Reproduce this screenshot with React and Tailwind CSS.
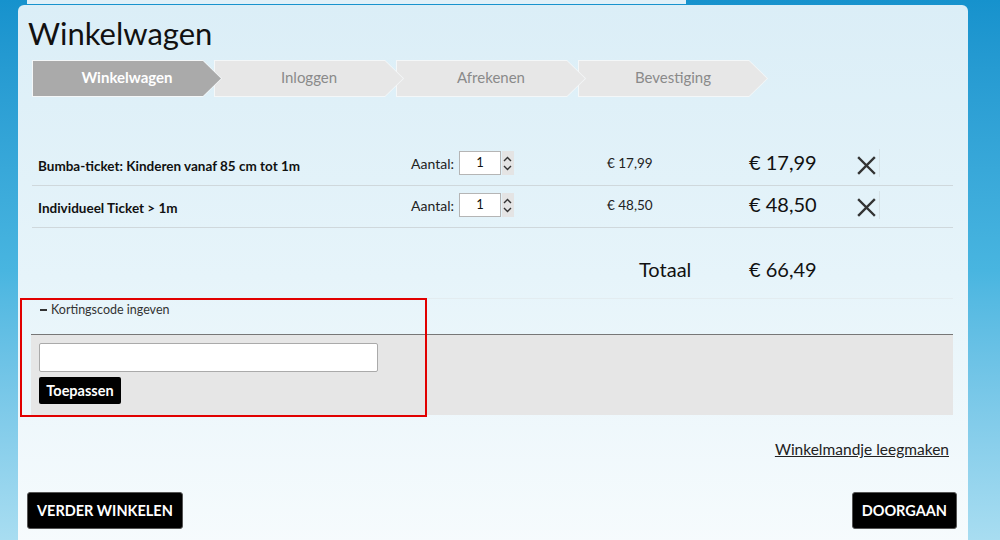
import React from 'react';

const steps = [
  { label: 'Winkelwagen', active: true },
  { label: 'Inloggen' },
  { label: 'Afrekenen' },
  { label: 'Bevestiging' },
];

const items = [
  { name: 'Bumba-ticket: Kinderen vanaf 85 cm tot 1m', qty: 1, price: '€ 17,99', total: '€ 17,99' },
  { name: 'Individueel Ticket > 1m', qty: 1, price: '€ 48,50', total: '€ 48,50' },
];

const zIndex = ['z-[4]', 'z-[3]', 'z-[2]', 'z-[1]'];

function Spinner() {
  return (
    <div className="flex h-[24px] w-[12px] flex-col items-center justify-center gap-[3px] bg-[#e4e4e4]">
      <svg width="9" height="6" viewBox="0 0 9 6" fill="none" stroke="#333" strokeWidth="1.4">
        <path d="M1 5 L4.5 1.5 L8 5" />
      </svg>
      <svg width="9" height="6" viewBox="0 0 9 6" fill="none" stroke="#333" strokeWidth="1.4">
        <path d="M1 1 L4.5 4.5 L8 1" />
      </svg>
    </div>
  );
}

const CartPage = () => {
  return (
    <div className="relative h-[540px] w-[1000px] overflow-hidden bg-gradient-to-b from-[#1692cd] via-[#48b5e0] to-[#a8ddf1] font-['Lato','Open_Sans',sans-serif] text-[#111]">
      <div className="ml-[27px] h-[4px] w-[659px] bg-[#e0f0f8]" />
      <div className="ml-[18px] mt-[1px] h-[540px] w-[950px] rounded-t-[6px] bg-gradient-to-b from-[#dbeef7] via-[#e6f4fa] to-[#f6fbfd] pt-[10px]">
        <h1 className="h-[37px] pl-[10px] text-[31px] leading-[37px] font-normal">Winkelwagen</h1>

        {/* steps */}
        <div className="ml-[14px] mt-[8px] flex">
          {steps.map((s, i) => (
            <div
              key={s.label}
              className={`relative h-[37px] w-[190px] bg-[#f4f7f8] [clip-path:polygon(0_0,calc(100%_-_19px)_0,100%_50%,calc(100%_-_19px)_100%,0_100%)] ${i > 0 ? '-ml-[8px]' : ''} ${zIndex[i]}`}
            >
              <div
                className={`absolute inset-[1px] flex items-center justify-center pb-[3px] text-[15px] [clip-path:polygon(0_0,calc(100%_-_18px)_0,100%_50%,calc(100%_-_18px)_100%,0_100%)] ${s.active ? 'bg-[#aaaaaa] font-bold text-white' : 'bg-[#e7e7e7] text-[#8a8a8a]'}`}
              >
                {s.label}
              </div>
            </div>
          ))}
        </div>

        {/* cart table */}
        <div className="ml-[14px] mt-[47px] w-[921px]">
          {items.map((item) => (
            <div key={item.name} className="flex h-[42px] items-center border-b border-[#cfd8dc] pb-[3px]">
              <div className="w-[373px] pl-[6px] pt-[7px] text-[13.5px] font-bold text-[#111]">{item.name}</div>
              <div className="flex w-[196px] items-center pl-[6px]">
                <span className="mr-[5px] text-[14px] text-[#222]">Aantal:</span>
                <div className="flex h-[24px] w-[42px] items-center justify-center border border-[#b5b5b5] bg-white text-[13px]">
                  {item.qty}
                </div>
                <div className="ml-[1px]">
                  <Spinner />
                </div>
              </div>
              <div className="w-[142px] pl-[6px] text-[13.5px] text-[#222]">{item.price}</div>
              <div className="-mt-[2px] w-[107px] pl-[6px] text-[20px] text-[#111]">{item.total}</div>
              <div className="flex h-[28px] w-[30px] items-center justify-start border-r border-[#d6e2e7] pl-[7px] pt-[4px]">
                <svg width="19" height="19" viewBox="0 0 19 19" stroke="#333" strokeWidth="2.4" strokeLinecap="square">
                  <path d="M2 2 L17 17 M17 2 L2 17" />
                </svg>
              </div>
            </div>
          ))}

          <div className="flex h-[71px] items-center border-b border-[#e3ecf0] pt-[12px]">
            <div className="w-[601px]" />
            <div className="w-[110px] pl-[6px] text-[20px] text-[#111]">Totaal</div>
            <div className="pl-[6px] text-[20px] text-[#111]">€ 66,49</div>
          </div>

          {/* discount */}
          <div className="flex h-[35px] items-start pl-[8px] pt-[2px] text-[12.5px] text-[#333]">
            <span className="mr-[4px] mt-[8px] h-[2px] w-[7px] bg-[#333]" />
            Kortingscode ingeven
          </div>
          <div className="-ml-[1px] border-t border-[#777] bg-[#e6e6e6] px-[8px] pb-[11px] pt-[8px]">
            <div className="h-[29px] w-[339px] rounded-[2px] border border-[#aaa] bg-white" />
            <button className="mt-[5px] flex h-[27px] w-[82px] items-center justify-center rounded-[2px] bg-black text-[14.5px] font-bold text-white">
              Toepassen
            </button>
          </div>
        </div>

        <div className="mt-[25px] flex justify-end pr-[19px]">
          <a className="text-[15.5px] leading-[18px] text-[#222] underline">Winkelmandje leegmaken</a>
        </div>

        <div className="mt-[34px] flex justify-between pl-[9px] pr-[11px]">
          <button className="h-[37px] rounded-[3px] border border-[#555] bg-black px-[9px] text-[14.5px] font-bold text-white">
            VERDER WINKELEN
          </button>
          <button className="h-[37px] rounded-[3px] border border-[#555] bg-black px-[9px] text-[14.5px] font-bold text-white">
            DOORGAAN
          </button>
        </div>
      </div>

      {/* highlight annotation */}
      <div className="absolute left-[20px] top-[298px] h-[119px] w-[407px] border-2 border-[#e10000]" />
    </div>
  );
};

export default CartPage;
